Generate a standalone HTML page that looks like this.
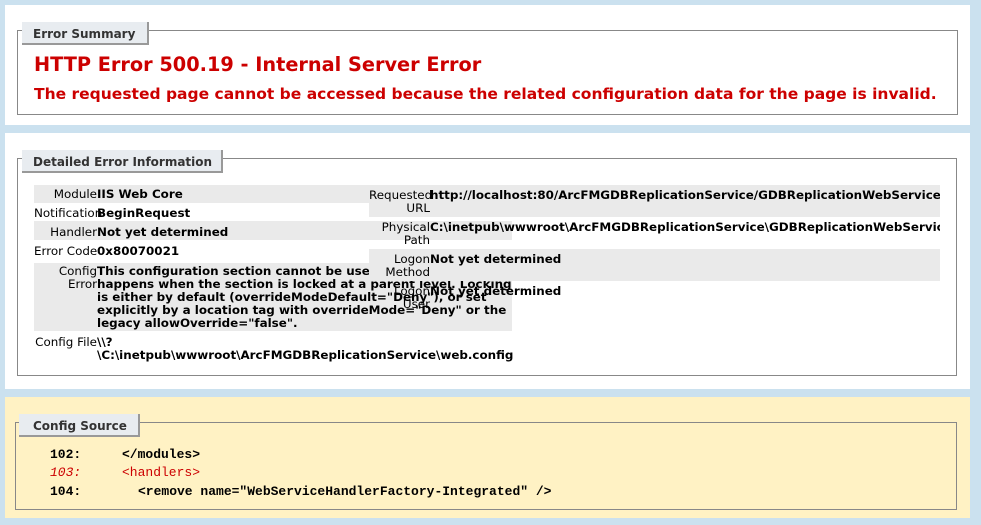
<!DOCTYPE html>
<html><head><meta charset="utf-8"><style>
*{margin:0;padding:0;box-sizing:border-box}
body{width:981px;height:525px;background:#CBE1EF;position:relative;overflow:hidden;font-family:Verdana,"DejaVu Sans",sans-serif;color:#000}
.a{position:absolute;white-space:nowrap}
.panel{position:absolute;left:5px;width:965px;background:#fff}
.fs{position:absolute;border:1px solid #888;border-top:1px solid #888}
.lg{position:absolute;background:#E8ECF0;border-right:2px solid #999;border-bottom:2px solid #999;font-weight:bold;font-size:12px;color:#333;padding-left:11px;line-height:25px}
.g{position:absolute;background:#EAEAEA}
.t{font-size:11.9px;line-height:13px}
.b{font-weight:bold}
.r{text-align:right}
.m{font-family:"Liberation Mono","Courier New",monospace;font-weight:bold;font-size:13px}
</style></head><body>
<div class="panel" style="top:5px;height:120px"></div>
<div class="panel" style="top:133px;height:256px"></div>
<div class="panel" style="top:397px;height:121px;background:#FFF2C4"></div>

<div class="fs" style="left:17px;top:30px;width:941px;height:85px"></div>
<div class="lg" style="left:22px;top:22px;width:127px;height:23px">Error Summary</div>
<div class="a b" style="left:34px;top:53px;font-size:19.3px;color:#C00">HTTP Error 500.19 - Internal Server Error</div>
<div class="a b" style="left:34px;top:85px;font-size:15.5px;color:#C00">The requested page cannot be accessed because the related configuration data for the page is invalid.</div>

<div class="fs" style="left:17px;top:158px;width:940px;height:218px"></div>
<div class="lg" style="left:22px;top:150px;width:201px;height:23px">Detailed Error Information</div>

<div class="g" style="left:34px;top:185px;width:478px;height:18px"></div>
<div class="g" style="left:34px;top:221px;width:478px;height:19px"></div>
<div class="g" style="left:34px;top:263px;width:478px;height:68px"></div>

<div class="a t" style="left:34px;top:188px;width:63px;text-align:right">Module</div><div class="a t b" style="left:97px;top:188px">IIS Web Core</div>
<div class="a t" style="left:34px;top:207px">Notification</div><div class="a t b" style="left:97px;top:207px">BeginRequest</div>
<div class="a t" style="left:34px;top:226px;width:63px;text-align:right">Handler</div><div class="a t b" style="left:97px;top:226px">Not yet determined</div>
<div class="a t" style="left:34px;top:245px">Error Code</div><div class="a t b" style="left:97px;top:245px">0x80070021</div>
<div class="a t" style="left:34px;top:265px;width:63px;text-align:right">Config<br>Error</div>
<div class="a t b" style="left:97px;top:265px">This configuration section cannot be used<br>happens when the section is locked at a parent level. Locking<br>is either by default (overrideModeDefault="Deny"), or set<br>explicitly by a location tag with overrideMode="Deny" or the<br>legacy allowOverride="false".</div>
<div class="a t" style="left:34px;top:336px;width:63px;text-align:right">Config File</div><div class="a t b" style="left:97px;top:336px">\\?<br>\C:\inetpub\wwwroot\ArcFMGDBReplicationService\web.config</div>

<div style="position:absolute;left:369px;top:185px;width:571px;height:130px;overflow:hidden">
<div class="g" style="left:0;top:0;width:571px;height:32px"></div>
<div class="g" style="left:0;top:64px;width:571px;height:32px"></div>
<div class="a t r" style="left:0;top:4px;width:61px">Requested<br>URL</div><div class="a t b" style="left:61px;top:4px">http://localhost:80/ArcFMGDBReplicationService/GDBReplicationWebService.asmx</div>
<div class="a t r" style="left:0;top:36px;width:61px">Physical<br>Path</div><div class="a t b" style="left:61px;top:36px">C:\inetpub\wwwroot\ArcFMGDBReplicationService\GDBReplicationWebService.asmx</div>
<div class="a t r" style="left:0;top:68px;width:61px">Logon<br>Method</div><div class="a t b" style="left:61px;top:68px">Not yet determined</div>
<div class="a t r" style="left:0;top:100px;width:61px">Logon<br>User</div><div class="a t b" style="left:61px;top:100px">Not yet determined</div>
</div>

<div class="fs" style="left:15px;top:422px;width:942px;height:88px"></div>
<div class="lg" style="left:19px;top:414px;width:121px;height:23px;padding-left:14px">Config Source</div>
<div class="a m" style="left:50px;top:447px">102:</div><div class="a m" style="left:122px;top:447px">&lt;/modules&gt;</div>
<div class="a m" style="left:50px;top:465px;color:#C00;font-style:italic;font-weight:normal">103:</div><div class="a m" style="left:122px;top:465px;color:#C00;font-weight:normal">&lt;handlers&gt;</div>
<div class="a m" style="left:50px;top:484px">104:</div><div class="a m" style="left:138px;top:484px">&lt;remove name="WebServiceHandlerFactory-Integrated" /&gt;</div>
</body></html>
